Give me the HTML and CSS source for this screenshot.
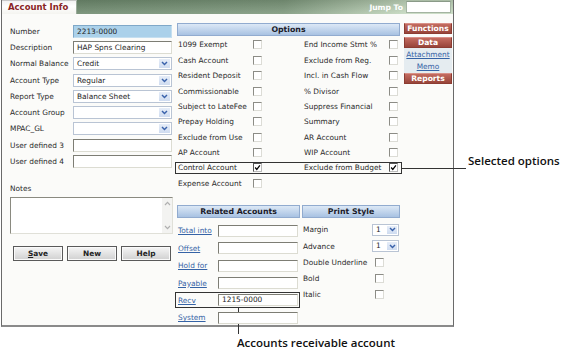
FILE: index.html
```html
<!DOCTYPE html>
<html>
<head>
<meta charset="utf-8">
<link rel="stylesheet" href="styles.css">
</head>
<body>
<div class="page">
  <div class="frame">
    <div class="topbar">
      <div class="tab">Account Info</div>
      <div class="bar">
        <span class="jump-label">Jump To</span>
        <span class="jump-input"></span>
      </div>
    </div>
    <div class="content">
      <div class="col-left">
        <div class="fields">
          <span class="lbl">Number</span><div class="input blue">2213-0000</div>
          <span class="lbl">Description</span><div class="input">HAP Spns Clearing</div>
          <span class="lbl">Normal Balance</span><div class="select"><span class="val">Credit</span><span class="arr"><svg viewBox="0 0 7 5" width="7" height="5"><path d="M1 1 L3.5 3.6 L6 1" fill="none" stroke="#3a62aa" stroke-width="1.4"/></svg></span></div>
          <span class="lbl">Account Type</span><div class="select"><span class="val">Regular</span><span class="arr"><svg viewBox="0 0 7 5" width="7" height="5"><path d="M1 1 L3.5 3.6 L6 1" fill="none" stroke="#3a62aa" stroke-width="1.4"/></svg></span></div>
          <span class="lbl">Report Type</span><div class="select"><span class="val">Balance Sheet</span><span class="arr"><svg viewBox="0 0 7 5" width="7" height="5"><path d="M1 1 L3.5 3.6 L6 1" fill="none" stroke="#3a62aa" stroke-width="1.4"/></svg></span></div>
          <span class="lbl">Account Group</span><div class="select"><span class="val"></span><span class="arr"><svg viewBox="0 0 7 5" width="7" height="5"><path d="M1 1 L3.5 3.6 L6 1" fill="none" stroke="#3a62aa" stroke-width="1.4"/></svg></span></div>
          <span class="lbl">MPAC_GL</span><div class="select"><span class="val"></span><span class="arr"><svg viewBox="0 0 7 5" width="7" height="5"><path d="M1 1 L3.5 3.6 L6 1" fill="none" stroke="#3a62aa" stroke-width="1.4"/></svg></span></div>
          <span class="lbl">User defined 3</span><div class="input"></div>
          <span class="lbl">User defined 4</span><div class="input"></div>
        </div>
        <div class="notes-label">Notes</div>
        <div class="textarea">
          <div class="scroll">
            <svg viewBox="0 0 7 5" width="7" height="5"><path d="M1 4 L3.5 1.4 L6 4" fill="none" stroke="#b0b0b0" stroke-width="1.2"/></svg>
            <svg viewBox="0 0 7 5" width="7" height="5"><path d="M1 1 L3.5 3.6 L6 1" fill="none" stroke="#b0b0b0" stroke-width="1.2"/></svg>
          </div>
        </div>
        <div class="buttons">
          <div class="btn"><u>S</u>ave</div>
          <div class="btn">New</div>
          <div class="btn">Help</div>
        </div>
      </div>

      <div class="col-mid">
        <div class="head">Options</div>
        <div class="options">
          <div class="opt-row"><span class="ol">1099 Exempt</span><span class="cb"></span><span class="or">End Income Stmt %</span><span class="cb"></span></div>
          <div class="opt-row"><span class="ol">Cash Account</span><span class="cb"></span><span class="or">Exclude from Reg.</span><span class="cb"></span></div>
          <div class="opt-row"><span class="ol">Resident Deposit</span><span class="cb"></span><span class="or">Incl. in Cash Flow</span><span class="cb"></span></div>
          <div class="opt-row"><span class="ol">Commissionable</span><span class="cb"></span><span class="or">% Divisor</span><span class="cb"></span></div>
          <div class="opt-row"><span class="ol">Subject to LateFee</span><span class="cb"></span><span class="or">Suppress Financial</span><span class="cb"></span></div>
          <div class="opt-row"><span class="ol">Prepay Holding</span><span class="cb"></span><span class="or">Summary</span><span class="cb"></span></div>
          <div class="opt-row"><span class="ol">Exclude from Use</span><span class="cb"></span><span class="or">AR Account</span><span class="cb"></span></div>
          <div class="opt-row"><span class="ol">AP Account</span><span class="cb"></span><span class="or">WIP Account</span><span class="cb"></span></div>
          <div class="opt-row marked"><span class="ol">Control Account</span><span class="cb on"><svg viewBox="0 0 9 9" width="7" height="7"><path d="M1.5 4.5 L3.6 7 L7.6 1.8" fill="none" stroke="#000" stroke-width="1.6"/></svg></span><span class="or">Exclude from Budget</span><span class="cb on"><svg viewBox="0 0 9 9" width="7" height="7"><path d="M1.5 4.5 L3.6 7 L7.6 1.8" fill="none" stroke="#000" stroke-width="1.6"/></svg></span></div>
          <div class="opt-row"><span class="ol">Expense Account</span><span class="cb"></span></div>
        </div>
        <div class="lower">
          <div class="related">
            <div class="head">Related Accounts</div>
            <div class="rel-rows">
              <div class="rel-row"><a class="lnk">Total into</a><div class="input small"></div></div>
              <div class="rel-row"><a class="lnk">Offset</a><div class="input small"></div></div>
              <div class="rel-row"><a class="lnk">Hold for</a><div class="input small"></div></div>
              <div class="rel-row"><a class="lnk">Payable</a><div class="input small"></div></div>
              <div class="rel-row marked"><a class="lnk">Recv</a><div class="input small">1215-0000</div></div>
              <div class="rel-row"><a class="lnk">System</a><div class="input small"></div></div>
            </div>
          </div>
          <div class="print">
            <div class="head">Print Style</div>
            <div class="pr-rows">
              <div class="pr-row"><span class="pl">Margin</span><div class="select mini"><span class="val">1</span><span class="arr"><svg viewBox="0 0 7 5" width="7" height="5"><path d="M1 1 L3.5 3.6 L6 1" fill="none" stroke="#3a62aa" stroke-width="1.4"/></svg></span></div></div>
              <div class="pr-row"><span class="pl">Advance</span><div class="select mini"><span class="val">1</span><span class="arr"><svg viewBox="0 0 7 5" width="7" height="5"><path d="M1 1 L3.5 3.6 L6 1" fill="none" stroke="#3a62aa" stroke-width="1.4"/></svg></span></div></div>
              <div class="pr-row"><span class="pl">Double Underline</span><span class="cb pcb"></span></div>
              <div class="pr-row"><span class="pl">Bold</span><span class="cb pcb"></span></div>
              <div class="pr-row"><span class="pl">Italic</span><span class="cb pcb"></span></div>
            </div>
          </div>
        </div>
      </div>

      <div class="sidebar">
        <div class="sbtn">Functions</div>
        <div class="sbtn data">Data</div>
        <div class="sblinks">
          <a class="slink">Attachment</a>
          <a class="slink">Memo</a>
        </div>
        <div class="sbtn">Reports</div>
      </div>
    </div>
  </div>
  <div class="callout selected">Selected options</div>
  <div class="callout recv">Accounts receivable account</div>
</div>
</body>
</html>
```

FILE: styles.css
```css
* { box-sizing: border-box; }
html, body { margin: 0; padding: 0; background: #fff; }
body {
  font-family: "DejaVu Sans", Verdana, sans-serif;
  font-size: 7.4px;
  color: #2a2a2a;
}
.page { position: relative; width: 563px; height: 352px; }

.frame {
  margin-left: 1px;
  width: 453px;
  height: 327px;
  border-left: 1px solid #6a6a6a;
  border-right: 1px solid #6a6a6a;
  border-bottom: 2px solid #8a8a8a;
  background: #fbfbf9;
  display: flex;
  flex-direction: column;
}

.topbar { display: flex; height: 14px; }
.tab {
  width: 75px;
  background: linear-gradient(#f2f2f2, #ffffff 40%, #f4f4f0);
  border-top: 1px solid #c8c8c8;
  border-right: 1px solid #9aab9a;
  color: #8a2424;
  font-weight: bold;
  font-size: 8.5px;
  padding-left: 6px;
  line-height: 13px;
}
.bar {
  flex: 1;
  display: flex;
  align-items: center;
  justify-content: flex-end;
  gap: 3px;
  padding-right: 2px;
  background:
    linear-gradient(rgba(40,50,40,0.18), rgba(255,255,255,0.12)),
    linear-gradient(to right, #6d896d, #7c977b 55%, #c6dac0 88%);
}
.jump-label { color: #fff; font-weight: bold; font-size: 7.6px; }
.jump-input {
  width: 45px;
  height: 12px;
  background: #fff;
  border: 1px solid #a4b4a2;
  border-top-color: #8a9a88;
}

.content { display: flex; padding: 9px 0 0 8px; gap: 4px; }

.col-left { width: 163px; display: flex; flex-direction: column; }
.fields {
  display: grid;
  grid-template-columns: 63px 99px;
  grid-auto-rows: 16.3px;
  align-items: center;
}
.lbl { white-space: nowrap; }
.input {
  height: 13px;
  background: #fff;
  border: 1px solid;
  border-color: #7d7d74 #dcdcd2 #dcdcd2 #7d7d74;
  padding-left: 3px;
  line-height: 11px;
  color: #1e1e1e;
  white-space: nowrap;
}
.input.blue { background: #abd1ea; border-color: #7fa8c8 #c5dff0 #c5dff0 #7fa8c8; }
.select {
  height: 13px;
  background: #fff;
  border: 1px solid #b9c4d4;
  display: flex;
  align-items: stretch;
}
.select .val { flex: 1; padding-left: 3px; line-height: 11px; color: #1e1e1e; }
.select .arr {
  width: 11px;
  margin: 1px;
  background: linear-gradient(#e6edf8, #cfdcf0);
  display: flex;
  align-items: center;
  justify-content: center;
}

.notes-label { margin-top: 14px; height: 10px; line-height: 10px; }
.textarea {
  margin-top: 3px;
  height: 37px;
  background: #fff;
  border: 1px solid;
  border-color: #8a8a80 #e0e0d8 #e0e0d8 #8a8a80;
  display: flex;
  justify-content: flex-end;
}
.scroll {
  width: 10px;
  background: #f3f3f1;
  display: flex;
  flex-direction: column;
  justify-content: space-between;
  align-items: center;
  padding: 3px 0;
}
.buttons { margin-top: 12px; padding-left: 3px; display: flex; gap: 4px; }
.btn {
  width: 50px;
  height: 15px;
  border: 1px solid #5a5a5a;
  background: linear-gradient(#f6f6f6, #d0d0d0);
  box-shadow: inset 0 0 0 1px #fafafa;
  font-weight: bold;
  text-align: center;
  line-height: 13px;
  color: #222;
}

.col-mid { width: 223px; }
.head {
  height: 13px;
  background: linear-gradient(#dce8f6, #a8c2e2);
  border: 1px solid #91abcf;
  font-weight: bold;
  font-size: 7.8px;
  text-align: center;
  line-height: 11px;
  color: #1c1c2a;
}
.options { padding-top: 1.3px; }
.opt-row {
  position: relative;
  display: flex;
  align-items: center;
  height: 15.35px;
  padding-left: 1px;
}
.ol { width: 75px; white-space: nowrap; }
.or { width: 85px; margin-left: 42px; white-space: nowrap; }
.cb {
  width: 9px;
  height: 9px;
  background: #fff;
  border: 1px solid;
  border-color: #8c8c86 #dcdcd6 #dcdcd6 #8c8c86;
  display: flex;
  align-items: center;
  justify-content: center;
}
.cb.on { border-color: #555 #bbb #bbb #555; }
.opt-row.marked::before {
  content: "";
  position: absolute;
  left: -2px;
  right: -2px;
  top: 1.5px;
  bottom: 1.5px;
  border: 1px solid #333;
}
.opt-row.marked::after {
  content: "";
  position: absolute;
  left: 225px;
  width: 64px;
  top: 7.5px;
  height: 1px;
  background: #333;
}

.lower { margin-top: 14.2px; display: flex; gap: 2px; }
.related { width: 123px; }
.print { width: 98px; }
.rel-rows { padding-top: 4.3px; }
.rel-row {
  position: relative;
  display: flex;
  align-items: center;
  height: 17.4px;
  padding-left: 1px;
}
.lnk { width: 40px; color: #3563a6; text-decoration: underline; white-space: nowrap; }
.input.small { width: 80px; height: 12px; line-height: 10px; }
.rel-row.marked::before {
  content: "";
  position: absolute;
  left: -2px;
  right: 0;
  top: 0.5px;
  bottom: 1px;
  border: 1px solid #333;
}
.rel-row.marked::after {
  content: "";
  position: absolute;
  left: 61px;
  width: 1px;
  top: 16.4px;
  height: 26px;
  background: #333;
}
.pr-rows { padding-top: 3.9px; }
.pr-row { display: flex; align-items: center; height: 16.25px; padding-left: 1px; }
.pl { width: 69px; white-space: nowrap; }
.select.mini { width: 27px; height: 12px; }
.select.mini .val { line-height: 10px; }
.select.mini .arr { width: 10px; }
.pcb { margin-left: 3px; }

.sidebar { width: 48px; display: flex; flex-direction: column; }
.sbtn {
  height: 11px;
  background: linear-gradient(#c46c60, #98443a);
  border: 1px solid #8c3c32;
  border-top-color: #d89088;
  color: #fff;
  font-weight: bold;
  font-size: 7.6px;
  text-align: center;
  line-height: 9px;
}
.sbtn.data { margin-top: 3px; }
.sblinks {
  height: 25px;
  background: #e5ecf0;
  display: flex;
  flex-direction: column;
  align-items: center;
  padding-top: 2px;
  gap: 3px;
}
.slink { color: #3563a6; text-decoration: underline; line-height: 9px; }

.callout {
  position: absolute;
  font-family: "Open Sans", "Liberation Sans", sans-serif;
  font-weight: 600;
  font-size: 11.5px;
  color: #111;
  white-space: nowrap;
  line-height: 14px;
}
.callout.selected { left: 468px; top: 154px; }
.callout.recv { left: 237px; top: 336px; }
```
